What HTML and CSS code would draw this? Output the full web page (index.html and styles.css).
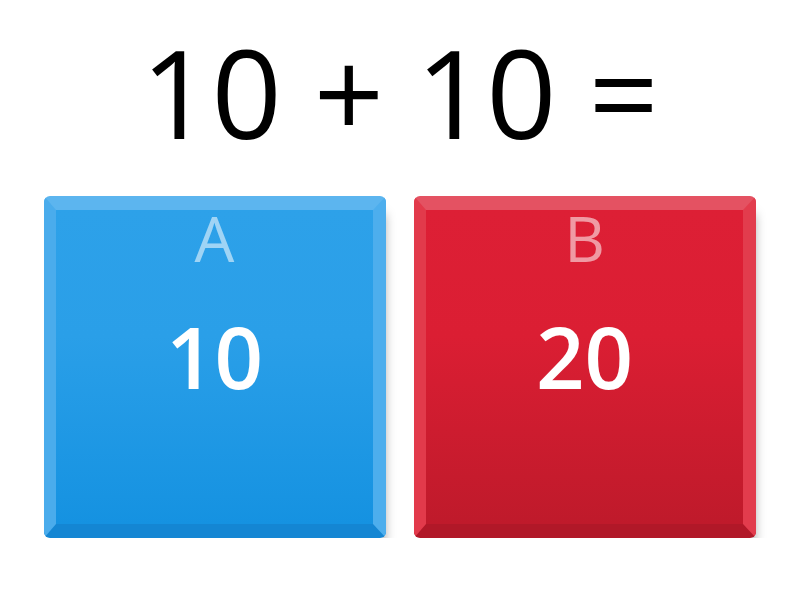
FILE: index.html
```html
<!DOCTYPE html>
<html lang="en">
<head>
  <meta charset="UTF-8">
  <title>10 + 10</title>
  <link rel="stylesheet" href="styles.css">
</head>
<body>
<!-- 题目 -->
<div class="question">10 + 10 =</div>

<!-- 选项 -->
<div class="answers">
  <div class="answer answer-blue">
    <div class="answer-key">A</div>
    <div class="answer-value">10</div>
  </div>
  <div class="answer answer-red">
    <div class="answer-key">B</div>
    <div class="answer-value">20</div>
  </div>
</div>
</body>
</html>
```

FILE: styles.css
```css
body {
  margin: 0;
  background-color: #fff;
  font-family: "Open Sans", "Noto Sans", sans-serif;
}
.question {
  padding-top: 30px;
  font-size: 123px;
  line-height: 1;
  text-align: center;
  color: #000;
}
.answers {
  display: flex;
  justify-content: center;
  gap: 28px;
  margin-top: 43px;
}
/* 方块按钮，边框做成斜面效果 */
.answer {
  box-sizing: border-box;
  width: 342px;
  height: 342px;
  border-style: solid;
  border-width: 14px 13px 14px 12px;
  border-radius: 6px;
  text-align: center;
  color: #fff;
  box-shadow: 5px 12px 10px -6px rgba(0, 0, 0, 0.35);
}
.answer-blue {
  border-color: #5cb5ef #4daeed #1486d3 #4aacec;
  background: linear-gradient(#2da1e9 0%, #2a9fe8 40%, #1592e1 100%);
}
.answer-red {
  border-color: #e45262 #e23c4d #b11828 #e23a4b;
  background: linear-gradient(#dd1f35 0%, #db1e33 40%, #bf1a2b 100%);
}
.answer-key {
  font-size: 63px;
  line-height: 56px;
  color: rgba(255, 255, 255, 0.55);
}
.answer-value {
  margin-top: 48px;
  font-size: 85px;
  font-weight: 600;
  line-height: 1;
}
```
